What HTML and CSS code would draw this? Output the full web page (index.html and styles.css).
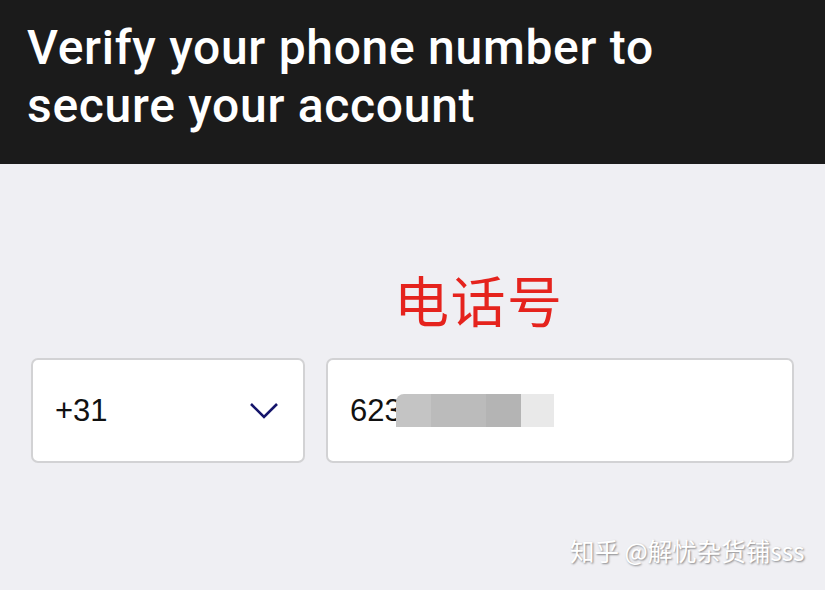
FILE: index.html
```html
<!DOCTYPE html>
<html lang="en">
<head>
    <meta charset="UTF-8">
    <title>Verify phone</title>
    <link rel="stylesheet" href="styles.css">
</head>
<body>
    <div class="header">
        <h1>Verify your phone number to secure your account</h1>
    </div>

    <div class="content">
        <div class="label">电话号</div>
        <div class="phone-row">
            <div class="field country">
                <span>+31</span>
                <svg class="chevron" width="30" height="20" viewBox="0 0 30 20">
                    <path d="M2 3 L15 16 L28 3" fill="none" stroke="#15156b" stroke-width="2.6"/>
                </svg>
            </div>
            <div class="field number">
                <span>623</span>
                <div class="blur">
                    <span class="b1"></span>
                    <span class="b2"></span>
                    <span class="b3"></span>
                    <span class="b4"></span>
                </div>
            </div>
        </div>
        <div class="watermark">知乎 @解忧杂货铺sss</div>
    </div>
</body>
</html>
```

FILE: styles.css
```css
body {
    margin: 0;
    background: #efeff3;
    font-family: "Liberation Sans", Arial, sans-serif;
}

.header {
    background: #1b1b1b;
    height: 164px;
    box-sizing: border-box;
    padding: 19px 27px 0;
}

.header h1 {
    margin: 0;
    color: #fff;
    font-family: Roboto, "Liberation Sans", sans-serif;
    font-weight: 500;
    font-size: 48px;
    line-height: 58px;
    letter-spacing: 0.7px;
    width: 720px;
}

.content {
    position: relative;
    height: 426px;
    padding: 0 31px;
}

.label {
    padding: 90px 0 0 363px;
    margin-bottom: 16px;
    height: 88px;
    color: #e5231d;
    font-family: "Noto Sans CJK SC", sans-serif;
    font-size: 55px;
    line-height: 88px;
    letter-spacing: 1.5px;
}

.phone-row {
    display: flex;
    gap: 21px;
}

.field {
    display: flex;
    align-items: center;
    height: 105px;
    box-sizing: border-box;
    background: #fff;
    border: 2px solid #d2d2d4;
    border-radius: 7px;
    font-size: 31px;
    color: #111;
}

.country {
    width: 274px;
    padding: 0 24px 0 22px;
    justify-content: space-between;
}

.number {
    width: 468px;
    padding-left: 22px;
}

.blur {
    display: flex;
    height: 33px;
    margin-left: -6px;
}

.blur span {
    display: block;
    height: 100%;
}

.b1 { width: 35px; background: #c4c4c4; border-radius: 8px 0 0 0; }
.b2 { width: 55px; background: #bbbbbb; }
.b3 { width: 35px; background: #b4b4b4; }
.b4 { width: 33px; background: #e9e9e9; }

.watermark {
    position: absolute;
    left: 570px;
    top: 369px;
    color: #fff;
    font-family: "Noto Sans CJK SC", sans-serif;
    font-size: 24.5px;
    text-shadow: 1px 1px 2px rgba(0,0,0,0.45);
}
```
